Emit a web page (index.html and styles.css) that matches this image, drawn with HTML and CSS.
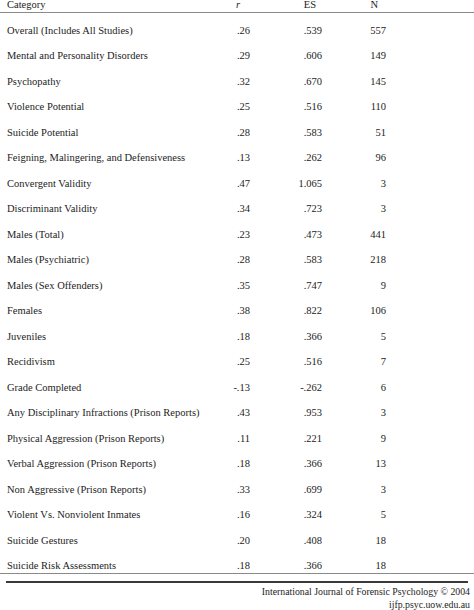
FILE: index.html
```html
<!DOCTYPE html>
<html>
<head>
<meta charset="utf-8">
<link rel="stylesheet" href="styles.css">
</head>
<body>
<div class="table">
  <div class="row head">
    <div class="cat">Category</div>
    <div class="r"><i>r</i></div>
    <div class="es">ES</div>
    <div class="n">N</div>
  </div>
  <div class="row"><div class="cat">Overall (Includes All Studies)</div><div class="r">.26</div><div class="es">.539</div><div class="n">557</div></div>
  <div class="row"><div class="cat">Mental and Personality Disorders</div><div class="r">.29</div><div class="es">.606</div><div class="n">149</div></div>
  <div class="row"><div class="cat">Psychopathy</div><div class="r">.32</div><div class="es">.670</div><div class="n">145</div></div>
  <div class="row"><div class="cat">Violence Potential</div><div class="r">.25</div><div class="es">.516</div><div class="n">110</div></div>
  <div class="row"><div class="cat">Suicide Potential</div><div class="r">.28</div><div class="es">.583</div><div class="n">51</div></div>
  <div class="row"><div class="cat">Feigning, Malingering, and Defensiveness</div><div class="r">.13</div><div class="es">.262</div><div class="n">96</div></div>
  <div class="row"><div class="cat">Convergent Validity</div><div class="r">.47</div><div class="es">1.065</div><div class="n">3</div></div>
  <div class="row"><div class="cat">Discriminant Validity</div><div class="r">.34</div><div class="es">.723</div><div class="n">3</div></div>
  <div class="row"><div class="cat">Males (Total)</div><div class="r">.23</div><div class="es">.473</div><div class="n">441</div></div>
  <div class="row"><div class="cat">Males (Psychiatric)</div><div class="r">.28</div><div class="es">.583</div><div class="n">218</div></div>
  <div class="row"><div class="cat">Males (Sex Offenders)</div><div class="r">.35</div><div class="es">.747</div><div class="n">9</div></div>
  <div class="row"><div class="cat">Females</div><div class="r">.38</div><div class="es">.822</div><div class="n">106</div></div>
  <div class="row"><div class="cat">Juveniles</div><div class="r">.18</div><div class="es">.366</div><div class="n">5</div></div>
  <div class="row"><div class="cat">Recidivism</div><div class="r">.25</div><div class="es">.516</div><div class="n">7</div></div>
  <div class="row"><div class="cat">Grade Completed</div><div class="r">-.13</div><div class="es">-.262</div><div class="n">6</div></div>
  <div class="row"><div class="cat">Any Disciplinary Infractions (Prison Reports)</div><div class="r">.43</div><div class="es">.953</div><div class="n">3</div></div>
  <div class="row"><div class="cat">Physical Aggression (Prison Reports)</div><div class="r">.11</div><div class="es">.221</div><div class="n">9</div></div>
  <div class="row"><div class="cat">Verbal Aggression (Prison Reports)</div><div class="r">.18</div><div class="es">.366</div><div class="n">13</div></div>
  <div class="row"><div class="cat">Non Aggressive (Prison Reports)</div><div class="r">.33</div><div class="es">.699</div><div class="n">3</div></div>
  <div class="row"><div class="cat">Violent Vs. Nonviolent Inmates</div><div class="r">.16</div><div class="es">.324</div><div class="n">5</div></div>
  <div class="row"><div class="cat">Suicide Gestures</div><div class="r">.20</div><div class="es">.408</div><div class="n">18</div></div>
  <div class="row last"><div class="cat">Suicide Risk Assessments</div><div class="r">.18</div><div class="es">.366</div><div class="n">18</div></div>
</div>
<div class="rule"></div>
<div class="footer">
  <div>International Journal of Forensic Psychology © 2004</div>
  <div>ijfp.psyc.uow.edu.au</div>
</div>
</body>
</html>
```
FILE: styles.css
```css
html, body {
  margin: 0;
  padding: 0;
  background: #ffffff;
}
body {
  font-family: "Liberation Serif", "Times New Roman", serif;
  font-size: 10.5px;
  color: #1c1c1c;
  width: 474px;
  overflow: hidden;
}
.table {
  display: flex;
  flex-direction: column;
}
.row {
  display: grid;
  grid-template-columns: 228px 22px 72px 64px;
  height: 25.5px;
  box-sizing: border-box;
  padding-top: 11.5px;
  line-height: 12px;
  white-space: nowrap;
}
.row .cat {
  padding-left: 7px;
}
.row .r, .row .es, .row .n {
  text-align: right;
}
.row.head {
  height: 13px;
  padding-top: 0;
  line-height: 10px;
  border-bottom: 1px solid #8a8a8a;
}
.row.head .r {
  padding-right: 10px;
}
.row.head .es {
  padding-right: 6px;
}
.row.head .n {
  padding-right: 8px;
}
.row.last {
  border-bottom: 1px solid #8a8a8a;
}
.rule {
  margin: 7px 6px 0 6px;
  height: 2px;
  background: #3a3a3a;
}
.footer {
  text-align: right;
  padding-right: 4px;
  font-size: 9.8px;
  line-height: 13px;
  margin-top: 2px;
}
```
